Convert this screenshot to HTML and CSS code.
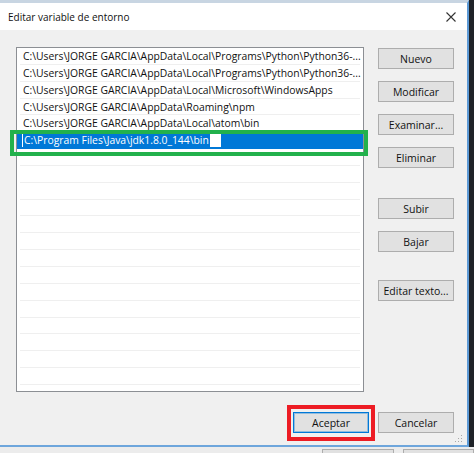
FILE: index.html
```html
<!DOCTYPE html>
<html lang="es">
<head>
    <meta charset="UTF-8">
    <meta name="viewport" content="width=device-width, initial-scale=1.0">
    <title>Editar variable de entorno</title>
    <link rel="stylesheet" href="styles.css">
</head>
<body>
    <div class="screen">
        <div class="dialog">
            <div class="titlebar">
                <span class="title">Editar variable de entorno</span>
                <svg class="close" width="10" height="10" viewBox="0 0 10 10">
                    <path d="M0.5 0.5 L9.5 9.5 M9.5 0.5 L0.5 9.5" />
                </svg>
            </div>
            <div class="content">
                <div class="main">
                    <ul class="pathlist">
                        <li>C:\Users\JORGE GARCIA\AppData\Local\Programs\Python\Python36-...</li>
                        <li>C:\Users\JORGE GARCIA\AppData\Local\Programs\Python\Python36-...</li>
                        <li>C:\Users\JORGE GARCIA\AppData\Local\Microsoft\WindowsApps</li>
                        <li>C:\Users\JORGE GARCIA\AppData\Roaming\npm</li>
                        <li>C:\Users\JORGE GARCIA\AppData\Local\atom\bin</li>
                        <li class="selected"><span class="edit"><span class="sel">C:\Program Files\Java\jdk1.8.0_144\bin</span></span></li>
                        <li></li>
                        <li></li>
                        <li></li>
                        <li></li>
                        <li></li>
                        <li></li>
                        <li></li>
                        <li></li>
                        <li></li>
                        <li></li>
                        <li></li>
                        <li></li>
                        <li></li>
                        <li></li>
                    </ul>
                    <div class="side">
                        <button>Nuevo</button>
                        <button>Modificar</button>
                        <button>Examinar...</button>
                        <button>Eliminar</button>
                        <button class="group">Subir</button>
                        <button>Bajar</button>
                        <button class="group-last">Editar texto...</button>
                    </div>
                </div>
                <div class="footer">
                    <button class="default">Aceptar</button>
                    <button>Cancelar</button>
                    <!-- size grip in the corner -->
                    <svg class="grip" width="8" height="8" viewBox="0 0 8 8">
                        <rect x="6" y="0" width="1" height="1" />
                        <rect x="3" y="3" width="1" height="1" />
                        <rect x="6" y="3" width="1" height="1" />
                        <rect x="0" y="6" width="1" height="1" />
                        <rect x="3" y="6" width="1" height="1" />
                        <rect x="6" y="6" width="1" height="1" />
                    </svg>
                </div>
            </div>
        </div>
        <div class="parent-bar">
            <span class="stub"></span>
            <span class="stub"></span>
        </div>
    </div>
</body>
</html>
```

FILE: styles.css
```css
body {
    margin: 0;
    font-family: "Open Sans", "Noto Sans", sans-serif;
    font-size: 10.35px;
    color: #000;
    background: #1f2328;
}
.screen {
    width: 474px;
    height: 453px;
    display: grid;
    grid-template-columns: 469px 1fr;
    grid-template-rows: 447px 1fr;
    overflow: hidden;
}
.dialog {
    border-top: 3px solid #c8d5e2;
    border-right: 2px solid #5d9ad6;
    border-bottom: 2px solid #6ea6dc;
    background: #f0f0f0;
    display: flex;
    flex-direction: column;
}
.titlebar {
    height: 27px;
    background: #fff;
    display: flex;
    align-items: center;
    justify-content: space-between;
    padding: 0 11px 0 8px;
}
.title {
    font-size: 10px;
    color: #111;
}
.close {
    stroke: #333;
    stroke-width: 1.1;
}
.content {
    flex: 1;
    padding: 17px 13px 0 16px;
    position: relative;
}
.main {
    display: flex;
    gap: 14px;
}
.pathlist {
    list-style: none;
    margin: 0;
    padding: 0;
    width: 346px;
    height: 343px;
    background: #fff;
    border: 1px solid #8c8f94;
}
.pathlist li {
    height: 16.85px;
    line-height: 16px;
    margin: 0 3px;
    padding-left: 3px;
    border-bottom: 1px solid #efefef;
    box-sizing: border-box;
    white-space: nowrap;
    color: #111;
}
.pathlist li.selected {
    position: relative;
    margin: 0;
    padding-left: 5px;
    background: #0078d7;
    border-bottom-color: #0078d7;
}
/* green marker around the row being edited */
.pathlist li.selected::after {
    content: "";
    position: absolute;
    left: -7px;
    right: -5px;
    top: -2px;
    bottom: -8px;
    border: 4px solid #22b14c;
}
.edit {
    display: inline-block;
    line-height: 11px;
    padding-right: 10px;
    background: #fff;
    border: 1px solid #fff;
}
.sel {
    background: #0078d7;
    color: #fff;
    padding: 0 1px;
}
.side {
    width: 76px;
    display: flex;
    flex-direction: column;
    gap: 12px;
    padding-top: 1px;
}
button {
    font-family: inherit;
    font-size: 10.5px;
    color: #111;
    width: 76px;
    height: 21px;
    padding: 0;
    background: #e1e1e1;
    border: 1px solid #adadad;
    white-space: nowrap;
}
.side .group {
    margin-top: 18px;
}
.side .group-last {
    margin-top: 16px;
}
.footer {
    display: flex;
    justify-content: flex-end;
    gap: 9px;
    margin-top: 20px;
}
.default {
    position: relative;
    border-color: #0078d7;
    box-shadow: inset 0 0 0 1px rgba(0, 120, 215, 0.35);
}
/* red marker around the OK button */
.default::after {
    content: "";
    position: absolute;
    left: -7px;
    right: -7px;
    top: -8px;
    bottom: -9px;
    border: 4px solid #ed1c24;
}
.grip {
    position: absolute;
    right: 4px;
    bottom: 2px;
    fill: #a8a8a8;
}
.parent-bar {
    grid-column: 1 / -1;
    background: #ececec;
    display: flex;
    gap: 9px;
    padding: 2px 0 0 322px;
}
.stub {
    width: 76px;
    height: 20px;
    background: #e1e1e1;
    border: 1px solid #adadad;
}
```
